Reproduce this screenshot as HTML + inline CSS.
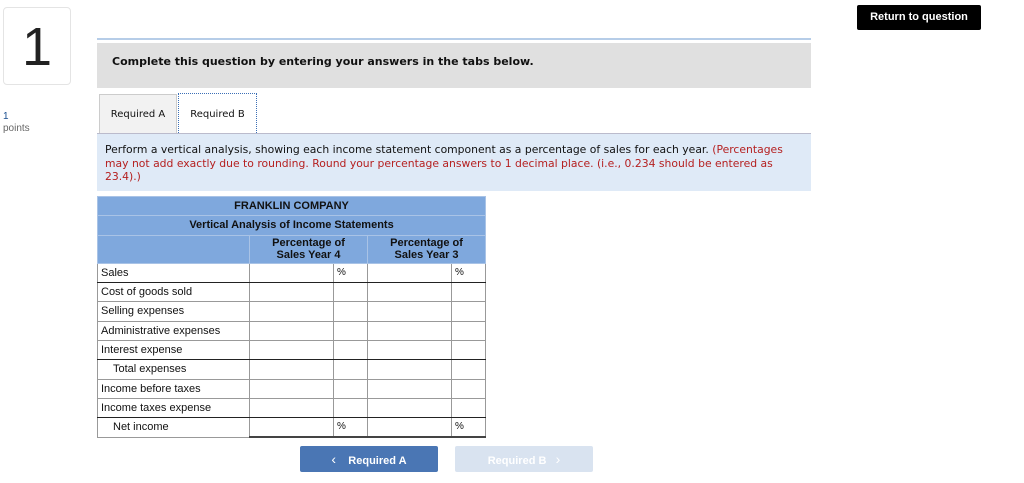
<!DOCTYPE html>
<html><head><meta charset="utf-8"><style>
*{margin:0;padding:0;box-sizing:border-box}
body{width:1024px;height:483px;background:#fff;position:relative;font-family:"Liberation Sans",Arial,sans-serif;overflow:hidden}
.a{position:absolute}
.v{font-family:"DejaVu Sans",Verdana,sans-serif}
td{border:1px solid #999;font-size:11px;height:19.33px;padding:0 3px;color:#111}
table{border-collapse:collapse;position:absolute;left:97px;top:196px;width:388px;table-layout:fixed}
.h td{background:#7fa8dd;font-weight:bold;text-align:center;border:1px solid #a9c3e6;font-size:11px;color:#111}
.b td{border-bottom:1.5px solid #222}
.p{font-size:10px;vertical-align:top;padding-top:3px}
</style></head><body>
<div class="a" style="left:3px;top:7px;width:68px;height:78px;border:1px solid #e4e4e4;border-radius:4px;font-size:54px;text-align:center;line-height:78px;color:#222">1</div>
<div class="a" style="left:3px;top:111px;font-size:10px;color:#1a4f8f">1</div>
<div class="a" style="left:3px;top:123px;font-size:10px;color:#666">points</div>
<div class="a" style="left:857px;top:5px;width:124px;height:25px;background:#000;border-radius:2px;color:#fff;font-weight:bold;font-size:11px;text-align:center;line-height:25px">Return to question</div>
<div class="a" style="left:97px;top:38px;width:714px;height:2px;background:#b6cde8"></div>
<div class="a v" style="left:97px;top:43px;width:714px;height:45px;background:#e0e0e0;font-weight:bold;font-size:11px;padding:12px 0 0 15px;color:#111">Complete this question by entering your answers in the tabs below.</div>
<div class="a v" style="left:99px;top:94px;width:78px;height:40px;background:#f2f2f2;border:1px solid #ccc;border-bottom:none;font-size:10px;text-align:center;line-height:40px;color:#111">Required A</div>
<div class="a v" style="left:178px;top:93px;width:79px;height:42px;background:#fff;border:1px dotted #3b6fb6;font-size:10px;text-align:center;line-height:42px;color:#111">Required B</div>
<div class="a v" style="left:97px;top:133px;width:714px;height:58px;background:#dfeaf7;border-top:1px solid #bbc;font-size:10.8px;line-height:13.5px;padding:9px 8px 0 8px;color:#111">Perform a vertical analysis, showing each income statement component as a percentage of sales for each year. <span style="color:#b52020">(Percentages may not add exactly due to rounding. Round your percentage answers to 1 decimal place. (i.e., 0.234 should be entered as 23.4).)</span></div>
<table>
<colgroup><col style="width:152px"><col style="width:84px"><col style="width:34px"><col style="width:84px"><col style="width:34px"></colgroup>
<tr class="h"><td colspan="5">FRANKLIN COMPANY</td></tr>
<tr class="h"><td colspan="5">Vertical Analysis of Income Statements</td></tr>
<tr class="h" style="height:28px"><td></td><td colspan="2" style="line-height:12px">Percentage of<br>Sales Year 4</td><td colspan="2" style="line-height:12px">Percentage of<br>Sales Year 3</td></tr>
<tr class="b"><td>Sales</td><td></td><td class="p">%</td><td></td><td class="p">%</td></tr>
<tr><td>Cost of goods sold</td><td></td><td></td><td></td><td></td></tr>
<tr><td>Selling expenses</td><td></td><td></td><td></td><td></td></tr>
<tr><td>Administrative expenses</td><td></td><td></td><td></td><td></td></tr>
<tr class="b"><td>Interest expense</td><td></td><td></td><td></td><td></td></tr>
<tr><td style="padding-left:15px">Total expenses</td><td></td><td></td><td></td><td></td></tr>
<tr><td>Income before taxes</td><td></td><td></td><td></td><td></td></tr>
<tr class="b"><td>Income taxes expense</td><td></td><td></td><td></td><td></td></tr>
<tr><td style="padding-left:15px">Net income</td><td style="border-bottom:2px solid #444"></td><td class="p" style="border-bottom:2px solid #444">%</td><td style="border-bottom:2px solid #444"></td><td class="p" style="border-bottom:2px solid #444">%</td></tr>
</table>
<div class="a" style="left:300px;top:446px;width:138px;height:26px;background:#4a76b4;border-radius:2px;color:#fff;font-weight:bold;font-size:11px;text-align:center;line-height:26px"><span style="font-size:14px;font-weight:normal">&lsaquo;</span>&nbsp;&nbsp;&nbsp; Required A</div>
<div class="a" style="left:455px;top:446px;width:138px;height:26px;background:#d9e3f0;border-radius:2px;color:#fff;font-weight:bold;font-size:11px;text-align:center;line-height:26px">Required B &nbsp;&nbsp;<span style="font-size:14px;font-weight:normal">&rsaquo;</span></div>
</body></html>
